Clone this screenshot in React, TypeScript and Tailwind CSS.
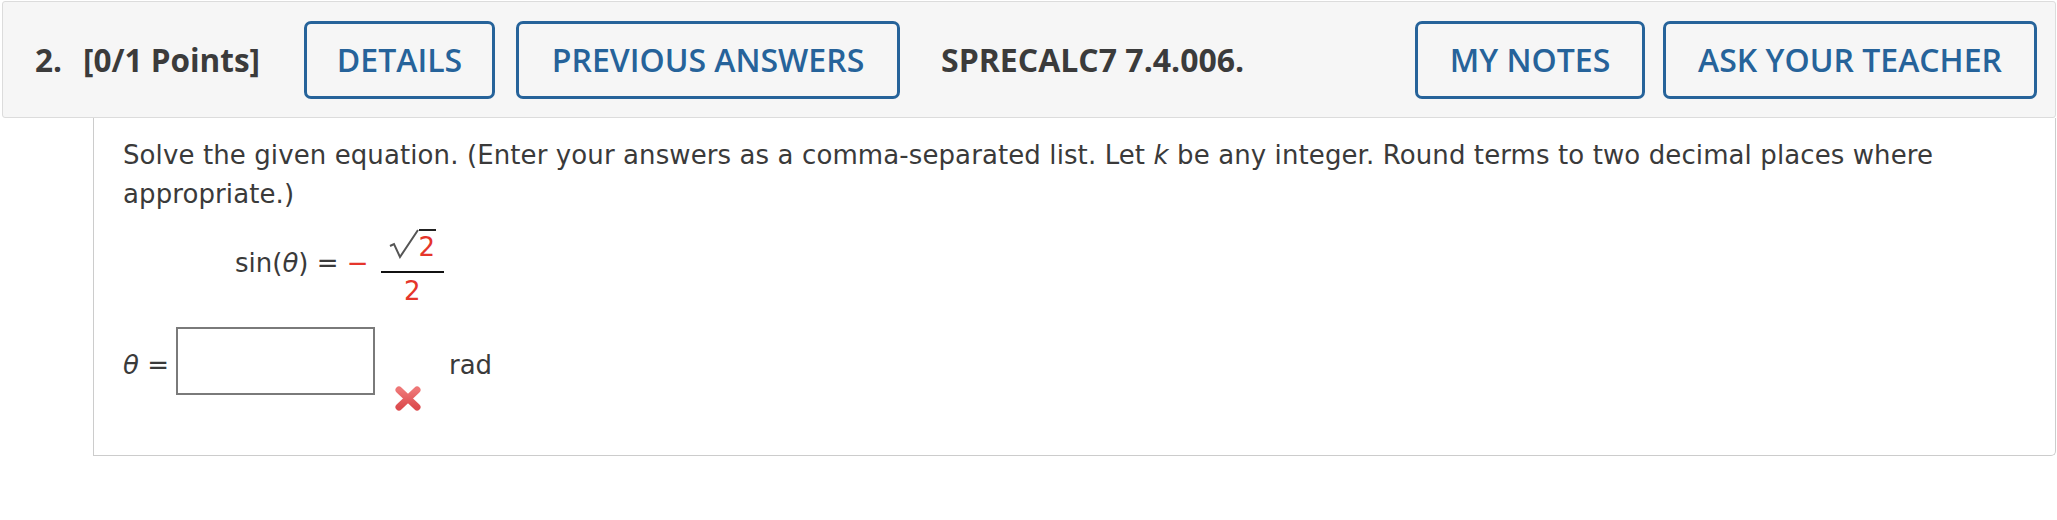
import React from "react"

function Btn({ label, w }: { label: string; w: string }) {
  return (
    <div
      className={`${w} h-[78px] flex items-center justify-center border-[3px] border-[#26639a] rounded-[7px] text-[#26639a] text-[32px] font-semibold leading-none`}
    >
      {label}
    </div>
  )
}

function Radical() {
  return (
    <svg width="30" height="30" viewBox="0 0 30 30" className="block">
      <path
        d="M1 17 L5 15 L11 28 L29 1"
        fill="none"
        stroke="#555"
        strokeWidth="2"
        strokeLinejoin="miter"
      />
    </svg>
  )
}

function WrongMark() {
  return (
    <svg width="28" height="27" viewBox="0 0 28 27" className="block">
      <defs>
        <linearGradient id="xg" x1="0" y1="0" x2="0" y2="1">
          <stop offset="0" stopColor="#ee7676" />
          <stop offset="1" stopColor="#dc4c4f" />
        </linearGradient>
      </defs>
      <path
        d="M5 5 L23 22 M23 5 L5 22"
        stroke="url(#xg)"
        strokeWidth="7"
        strokeLinecap="round"
      />
    </svg>
  )
}

export default function App() {
  return (
    <div className="w-[2057px] h-[520px] bg-white pl-[2px] pr-[1px] pt-[1px]">
      {/* question header */}
      <div
        className="h-[117px] flex items-center bg-[#f6f6f6] border border-[#dcdcdc] rounded-[3px] pl-[32px] pr-[18px] text-[#3b3b3b]"
        style={{ fontFamily: '"Open Sans", sans-serif' }}
      >
        <span className="text-[31.5px] font-bold">2.</span>
        <span className="ml-[21px] text-[31.5px] font-bold">[0/1 Points]</span>
        <div className="ml-[44px]">
          <Btn label="DETAILS" w="w-[191px]" />
        </div>
        <div className="ml-[21px]">
          <Btn label="PREVIOUS ANSWERS" w="w-[384px]" />
        </div>
        <span className="ml-[41px] text-[32px] font-bold">SPRECALC7 7.4.006.</span>
        <div className="ml-auto">
          <Btn label="MY NOTES" w="w-[230px]" />
        </div>
        <div className="ml-[18px]">
          <Btn label="ASK YOUR TEACHER" w="w-[374px]" />
        </div>
      </div>

      {/* question body */}
      <div
        className="ml-[91px] border-l border-r border-b border-[#cccccc] rounded-br-[5px] pl-[29px] pt-[18px] pb-[43px] text-[#3a3a3a] text-[26px]"
        style={{ fontFamily: '"DejaVu Sans", Verdana, sans-serif' }}
      >
        <p className="leading-[39px] pr-[60px] tracking-[0.1px]">
          Solve the given equation. (Enter your answers as a comma-separated list. Let <i>k</i> be any
          integer. Round terms to two decimal places where appropriate.)
        </p>

        <div className="ml-[112px] mt-[15px] flex items-start">
          <span className="mt-[19px] leading-[30px] whitespace-pre">
            sin(<i>θ</i>) = <span className="text-[#e5352b]">−</span>
          </span>
          <div className="ml-[12px] flex flex-col items-stretch">
            <div className="h-[42px] flex items-start justify-center px-[8px]">
              <Radical />
              <span className="border-t-2 border-[#222] text-[#e5352b] leading-[26px] pt-[3px] pr-[1px]">2</span>
            </div>
            <div className="h-[2px] bg-[#111]" />
            <div className="mt-[3px] leading-[30px] text-center text-[#e5352b]">2</div>
          </div>
        </div>

        <div className="mt-[21px] flex items-start">
          <span className="mt-[23px] leading-[30px] whitespace-pre">
            <i>θ</i> =
          </span>
          <div className="ml-[7px] w-[199px] h-[68px] border-2 border-[#7a7a7a] bg-white" />
          <div className="ml-[19px] mt-[58px]">
            <WrongMark />
          </div>
          <span className="ml-[27px] mt-[23px] leading-[30px]">rad</span>
        </div>
      </div>
    </div>
  )
}
